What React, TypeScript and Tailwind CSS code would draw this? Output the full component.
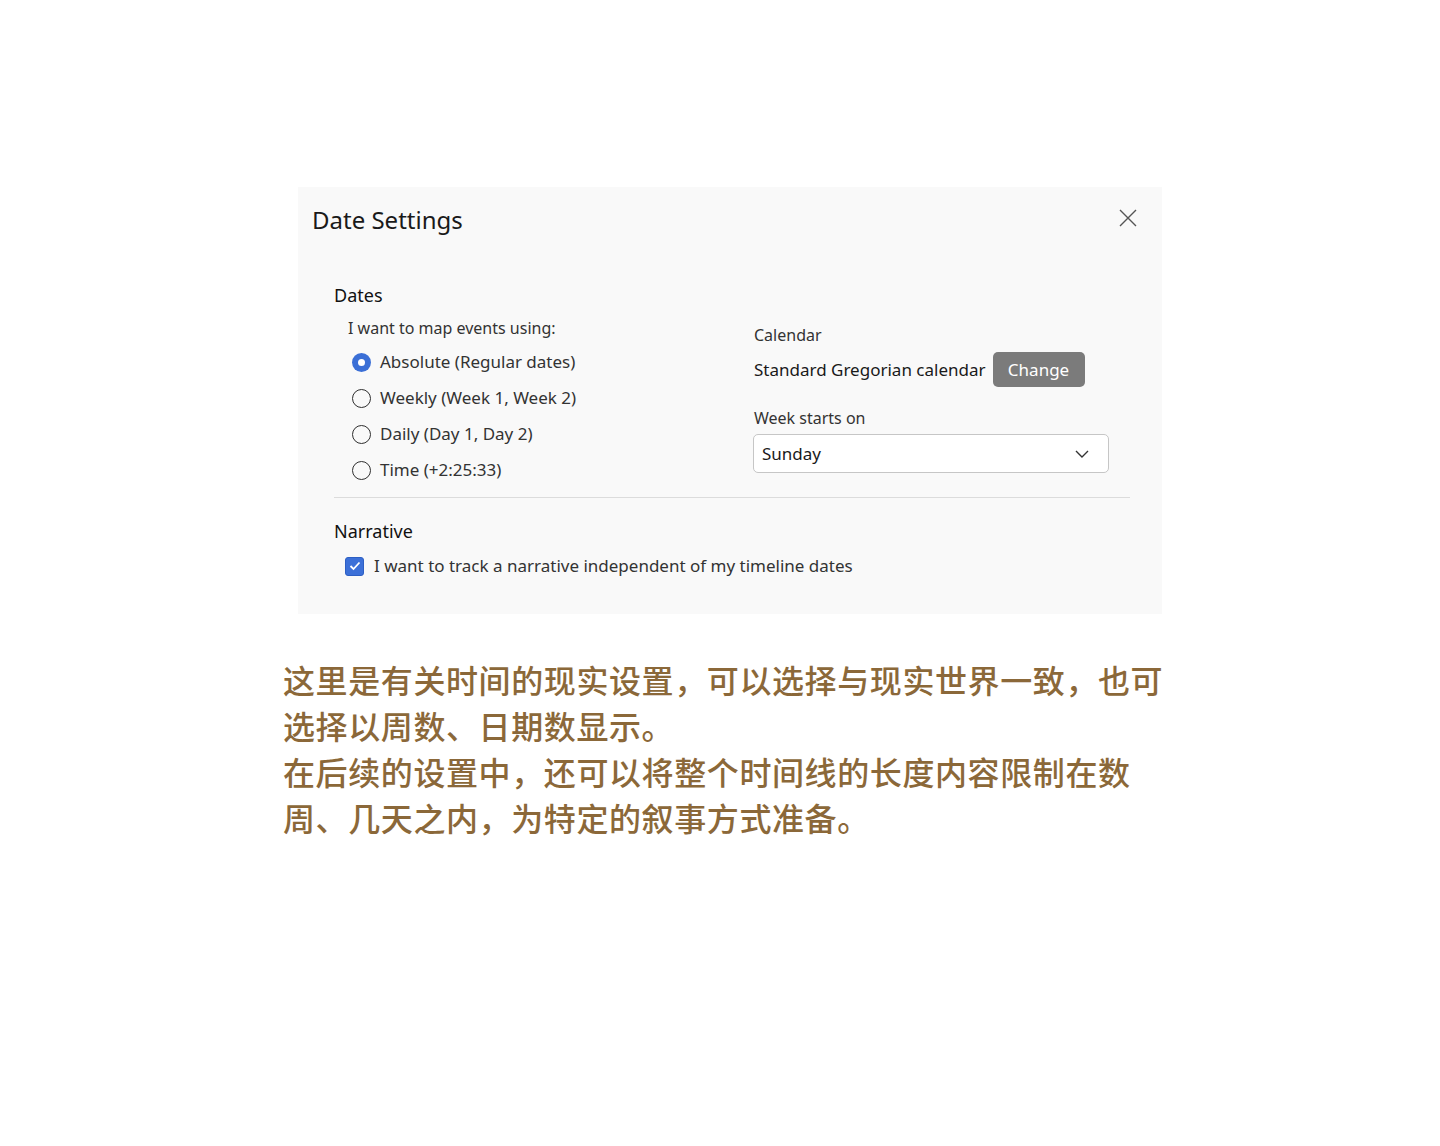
const options = [
  { label: 'Absolute (Regular dates)', checked: true },
  { label: 'Weekly (Week 1, Week 2)', checked: false },
  { label: 'Daily (Day 1, Day 2)', checked: false },
  { label: 'Time (+2:25:33)', checked: false },
];

function Radio({ checked }: { checked: boolean }) {
  if (checked) {
    return (
      <span className="flex h-[19px] w-[19px] items-center justify-center rounded-full bg-[#3b6fd6]">
        <span className="h-[7px] w-[7px] rounded-full bg-white" />
      </span>
    );
  }
  return <span className="h-[19px] w-[19px] rounded-full border-[1.5px] border-[#2f2f2f]" />;
}

export default function App() {
  return (
    <div
      className="min-h-[1146px] bg-white pl-[283px] pt-[187px]"
      style={{ fontFamily: '"Noto Sans", "Noto Sans CJK SC", sans-serif' }}
    >
      {/* Dialog */}
      <div className="ml-[15px] h-[427px] w-[864px] bg-[#f9f9f9]">
        <div className="flex items-center justify-between pl-[14px] pr-[25px] pt-[18px]">
          <h1 className="text-[24px] leading-[30px] text-[#1a1a1a]">Date Settings</h1>
          <svg className="mb-[4px]" width="18" height="18" viewBox="0 0 18 18" fill="none" stroke="#555" strokeWidth="1.4">
            <path d="M1 1L17 17M17 1L1 17" />
          </svg>
        </div>

        <div className="ml-[36px] mr-[32px] mt-[48px]">
          <h2 className="text-[18px] leading-[24px] text-[#111]">Dates</h2>

          <div className="flex">
            <div className="w-[420px]">
              <p className="ml-[14px] mt-[10px] text-[16px] leading-[22px] text-[#333]">
                I want to map events using:
              </p>
              <div className="mt-[5px]">
                {options.map((o) => (
                  <div key={o.label} className="ml-[18px] flex h-[36px] items-center gap-[9px]">
                    <Radio checked={o.checked} />
                    <span className="text-[17px] text-[#333]">{o.label}</span>
                  </div>
                ))}
              </div>
            </div>

            <div className="pt-[17px]">
              <p className="text-[16px] leading-[22px] text-[#333]">Calendar</p>
              <div className="mt-[6px] flex h-[35px] items-center gap-[7px]">
                <span className="text-[17px] text-[#1a1a1a]">Standard Gregorian calendar</span>
                <button className="h-[35px] w-[92px] rounded-[5px] bg-[#7b7b7b] text-[17px] text-white">
                  Change
                </button>
              </div>
              <p className="mt-[20px] text-[16px] leading-[22px] text-[#333]">Week starts on</p>
              <div className="-ml-[1px] mt-[5px] flex h-[39px] w-[356px] items-center justify-between rounded-[5px] border border-[#c6c6c6] bg-white pl-[8px] pr-[19px]">
                <span className="text-[17px] text-[#1a1a1a]">Sunday</span>
                <svg width="14" height="8" viewBox="0 0 14 8" fill="none" stroke="#333" strokeWidth="1.4">
                  <path d="M1 1L7 7L13 1" />
                </svg>
              </div>
            </div>
          </div>

          <div className="mt-[9px] h-px bg-[#dcdcdc]" />

          <h2 className="mt-[21px] text-[18px] leading-[24px] text-[#111]">Narrative</h2>
          <div className="ml-[11px] mt-[12px] flex h-[22px] items-center gap-[10px]">
            <span className="flex h-[19px] w-[19px] items-center justify-center rounded-[3px] border border-[#2d5fc4] bg-[#3c70d8]">
              <svg width="12" height="10" viewBox="0 0 12 10" fill="none" stroke="white" strokeWidth="1.8">
                <path d="M1.5 5L4.5 8L10.5 1.5" />
              </svg>
            </span>
            <span className="text-[17px] text-[#333]">I want to track a narrative independent of my timeline dates</span>
          </div>
        </div>
      </div>

      {/* Caption */}
      <div className="mt-[44px] text-[32px] font-medium leading-[46px] tracking-[0.6px] text-[#8b6839]">
        <p>
          这里是有关时间的现实设置，可以选择与现实世界一致，也可
          <br />
          选择以周数、日期数显示。
        </p>
        <p>
          在后续的设置中，还可以将整个时间线的长度内容限制在数
          <br />
          周、几天之内，为特定的叙事方式准备。
        </p>
      </div>
    </div>
  );
}
